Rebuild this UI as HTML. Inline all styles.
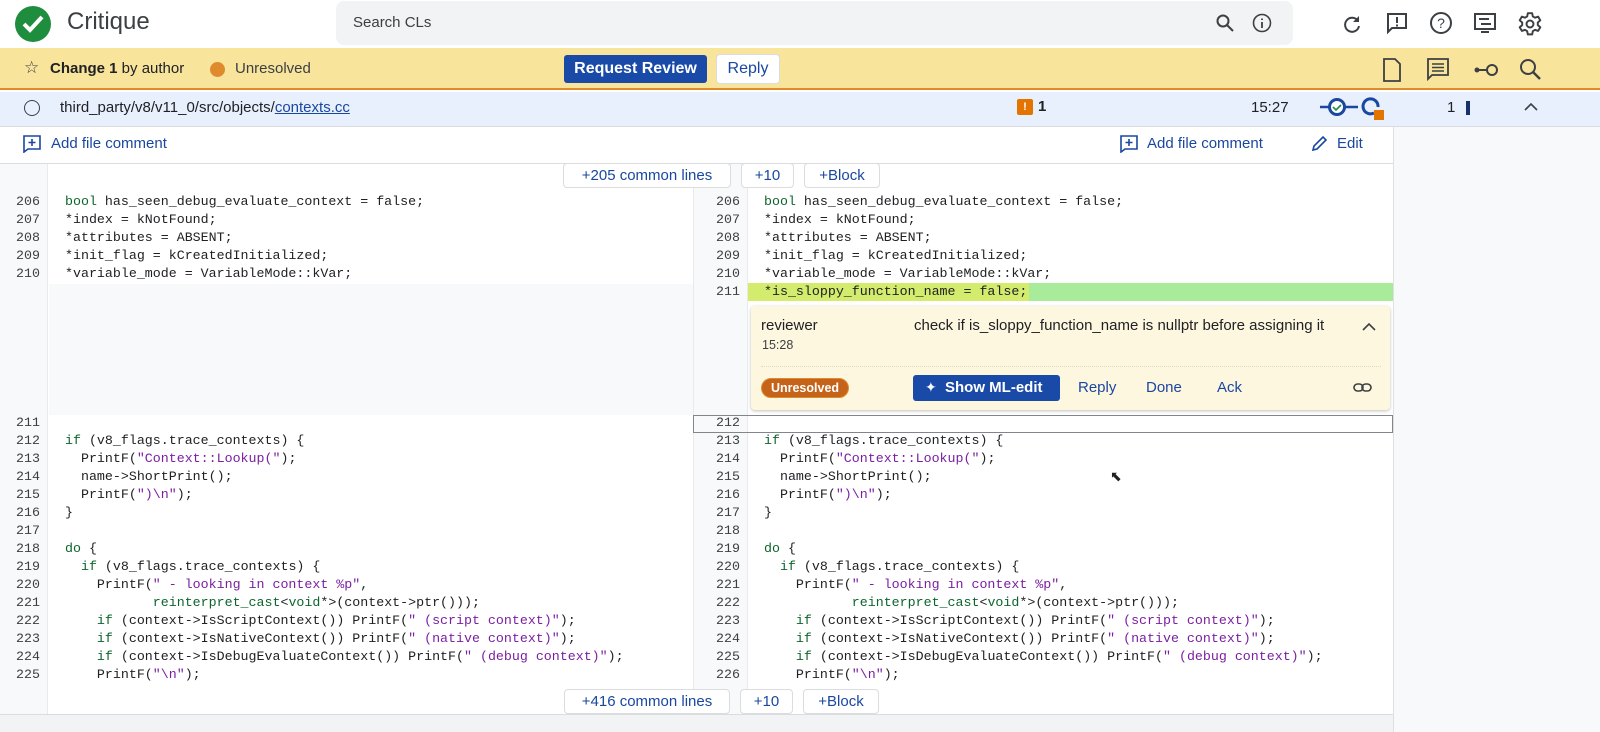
<!DOCTYPE html>
<html><head><meta charset="utf-8"><style>
*{box-sizing:border-box;margin:0;padding:0}
body{width:1600px;height:732px;overflow:hidden;background:#fff;font-family:"Liberation Sans",sans-serif;position:relative;color:#202124}
.abs{position:absolute}
.code{font-family:"Liberation Mono",monospace;font-size:13.3px;line-height:18px;white-space:pre;color:#202124}
.ln{font-family:"Liberation Mono",monospace;font-size:13.3px;line-height:18px;color:#3c4043;text-align:right;white-space:pre}
.k{color:#0d652d}.s{color:#7b1fa2}
.btn{position:absolute;border:1px solid #dadce0;border-radius:4px;background:#fff;color:#1a47a0;font-size:15px;text-align:center;line-height:24px}
.blue{color:#1a47a0}
</style></head><body>
<svg class="abs" style="left:14px;top:5px" width="38" height="38"><circle cx="19" cy="19" r="18" fill="#1e8e3e"/><path d="M10 19l6 6 12-13" stroke="#fff" stroke-width="4" fill="none"/></svg>
<div class="abs" style="left:67px;top:8px;font-size:24px;color:#3c4043">Critique</div>
<div class="abs" style="left:336px;top:1px;width:957px;height:44px;background:#f1f3f4;border-radius:8px"></div>
<div class="abs" style="left:353px;top:14px;font-size:15px;color:#3c4043">Search CLs</div>
<svg class="abs" style="left:1215px;top:13px" width="20" height="20"><circle cx="8" cy="8" r="5.5" stroke="#3c4043" stroke-width="2" fill="none"/><path d="M12 12l6 6" stroke="#3c4043" stroke-width="2"/></svg>
<svg class="abs" style="left:1252px;top:13px" width="20" height="20"><circle cx="10" cy="10" r="8.5" stroke="#3c4043" stroke-width="1.6" fill="none"/><path d="M10 9v6M10 5.5v1.5" stroke="#3c4043" stroke-width="1.8"/></svg>
<svg class="abs" style="left:1340px;top:12px" width="24" height="24"><path d="M18 9A7 7 0 1 0 19 14" stroke="#3c4043" stroke-width="2" fill="none"/><path d="M19 4v6h-6" fill="#3c4043"/></svg>
<svg class="abs" style="left:1385px;top:11px" width="24" height="24"><path d="M3 3h18v14H7l-4 4z" stroke="#3c4043" stroke-width="2" fill="none"/><path d="M12 6v6M12 13.5v2" stroke="#3c4043" stroke-width="2"/></svg>
<svg class="abs" style="left:1429px;top:11px" width="24" height="24"><circle cx="12" cy="12" r="10" stroke="#3c4043" stroke-width="2" fill="none"/><text x="12" y="17" font-size="14" text-anchor="middle" fill="#3c4043" font-family="Liberation Sans">?</text></svg>
<svg class="abs" style="left:1473px;top:11px" width="24" height="24"><rect x="2" y="3" width="20" height="15" stroke="#3c4043" stroke-width="2" fill="none"/><path d="M8 21h8M6 8h10M8 13h10" stroke="#3c4043" stroke-width="2"/></svg>
<svg class="abs" style="left:1517px;top:11px" width="26" height="26" viewBox="0 0 24 24"><path d="M10 2h4l.6 3 2 1.2 2.9-1 2 3.4-2.3 2v2.4l2.3 2-2 3.4-2.9-1-2 1.2-.6 3h-4l-.6-3-2-1.2-2.9 1-2-3.4 2.3-2v-2.4l-2.3-2 2-3.4 2.9 1 2-1.2z" stroke="#3c4043" stroke-width="1.8" fill="none" stroke-linejoin="round"/><circle cx="12" cy="12" r="3.2" stroke="#3c4043" stroke-width="1.8" fill="none"/></svg>
<div class="abs" style="left:0;top:48px;width:1600px;height:42px;background:#f9e49c;border-bottom:2px solid #e08a2e"></div>
<div class="abs" style="left:24px;top:58px;font-size:17px;color:#3c4043">☆</div>
<div class="abs" style="left:50px;top:60px;font-size:15px"><b>Change 1</b> by author</div>
<div class="abs" style="left:210px;top:62px;width:15px;height:15px;border-radius:50%;background:#e08a2e"></div>
<div class="abs" style="left:235px;top:60px;font-size:15px;color:#3c4043">Unresolved</div>
<div class="abs" style="left:564px;top:55px;width:143px;height:28px;background:#1a4aa8;border-radius:3px;color:#fff;font-size:16px;font-weight:bold;text-align:center;line-height:28px">Request Review</div>
<div class="btn" style="left:716px;top:54px;width:64px;height:30px;line-height:28px;font-size:16px">Reply</div>
<svg class="abs" style="left:1380px;top:57px" width="24" height="26"><path d="M4 2h11l5 5v17H4z" stroke="#3c4043" stroke-width="1.8" fill="none"/></svg>
<svg class="abs" style="left:1426px;top:57px" width="26" height="26"><path d="M2 2h20v16H6l-4 4z" stroke="#3c4043" stroke-width="1.8" fill="none"/><path d="M6 7h12M6 10.5h12M6 14h12" stroke="#3c4043" stroke-width="1.6"/></svg>
<svg class="abs" style="left:1472px;top:60px" width="28" height="20"><circle cx="5" cy="10" r="2.5" fill="#3c4043"/><path d="M7 10h8" stroke="#3c4043" stroke-width="2"/><circle cx="20" cy="10" r="5" stroke="#3c4043" stroke-width="2" fill="none"/></svg>
<svg class="abs" style="left:1518px;top:57px" width="26" height="26"><circle cx="10" cy="10" r="7" stroke="#3c4043" stroke-width="2" fill="none"/><path d="M15 15l7 7" stroke="#3c4043" stroke-width="2.4"/></svg>
<div class="abs" style="left:0;top:92px;width:1600px;height:35px;background:#e8f0fe;border-bottom:1px solid #dadce0"></div>
<div class="abs" style="left:24px;top:100px;width:16px;height:16px;border:1.6px solid #3c4043;border-radius:50%"></div>
<div class="abs" style="left:60px;top:99px;font-size:15px">third_party/v8/v11_0/src/objects/<span class="blue" style="text-decoration:underline">contexts.cc</span></div>
<div class="abs" style="left:1017px;top:99px;width:16px;height:16px;background:#e37400;border-radius:2px;color:#fff;font-size:11px;text-align:center;line-height:16px;font-weight:bold">!</div>
<div class="abs" style="left:1038px;top:98px;font-size:15px;font-weight:bold">1</div>
<div class="abs" style="left:1251px;top:99px;font-size:15px">15:27</div>
<svg class="abs" style="left:1318px;top:94px" width="72" height="30"><path d="M2 13h10M26 13h14" stroke="#1a47a0" stroke-width="2.5"/><circle cx="19" cy="13" r="7.5" stroke="#1a47a0" stroke-width="3" fill="#fff"/><path d="M15 13l3 3 5-5" stroke="#1e8e3e" stroke-width="1.6" fill="none"/><path d="M56 19A7.5 7.5 0 1 1 60 13" stroke="#1a47a0" stroke-width="3" fill="none"/><rect x="56" y="16" width="10" height="10" fill="#e37400"/></svg>
<div class="abs" style="left:1447px;top:99px;font-size:15px">1</div>
<div class="abs" style="left:1466px;top:101px;width:4px;height:14px;background:#1a2f6e"></div>
<svg class="abs" style="left:1523px;top:101px" width="16" height="12"><path d="M2 9l6-6 6 6" stroke="#3c4043" stroke-width="1.6" fill="none"/></svg>
<div class="abs" style="left:1393px;top:127px;width:207px;height:605px;background:#f8f9fa;border-left:1px solid #e0e0e0"></div>
<svg class="abs" style="left:23px;top:135px" width="18" height="18"><path d="M1 1h16v13H5l-4 3z" stroke="#1a47a0" stroke-width="1.6" fill="none"/><path d="M9 4v7M5.5 7.5h7" stroke="#1a47a0" stroke-width="1.6"/></svg>
<div class="abs blue" style="left:51px;top:135px;font-size:15px">Add file comment</div>
<svg class="abs" style="left:1120px;top:135px" width="18" height="18"><path d="M1 1h16v13H5l-4 3z" stroke="#1a47a0" stroke-width="1.6" fill="none"/><path d="M9 4v7M5.5 7.5h7" stroke="#1a47a0" stroke-width="1.6"/></svg>
<div class="abs blue" style="left:1147px;top:135px;font-size:15px">Add file comment</div>
<svg class="abs" style="left:1310px;top:135px" width="18" height="18"><path d="M3 15l1-4 9-9 3 3-9 9z" stroke="#1a47a0" stroke-width="1.6" fill="none"/></svg>
<div class="abs blue" style="left:1337px;top:135px;font-size:15px">Edit</div>
<div class="abs" style="left:0;top:163px;width:1393px;height:1px;background:#dadce0"></div>
<div class="abs" style="left:0;top:164px;width:48px;height:550px;background:#f8f9fa;border-right:1px solid #e8eaed"></div>
<div class="abs" style="left:693px;top:164px;width:55px;height:550px;background:#f8f9fa;border-left:1px solid #e8eaed;border-right:1px solid #e8eaed"></div>
<div class="btn" style="left:563px;top:163px;width:168px;height:25px">+205 common lines</div>
<div class="btn" style="left:741px;top:163px;width:53px;height:25px">+10</div>
<div class="btn" style="left:804px;top:163px;width:76px;height:25px">+Block</div>
<div class="abs ln" style="left:0;top:193px;width:40px">206
207
208
209
210</div>
<div class="abs code" style="left:65px;top:193px"><span class="k">bool</span> has_seen_debug_evaluate_context = false;
*index = kNotFound;
*attributes = ABSENT;
*init_flag = kCreatedInitialized;
*variable_mode = VariableMode::kVar;</div>
<div class="abs" style="left:49px;top:284px;width:644px;height:131px;background:#f8f9fa"></div>
<div class="abs ln" style="left:693px;top:193px;width:47px">206
207
208
209
210
211</div>
<div class="abs code" style="left:764px;top:193px"><span class="k">bool</span> has_seen_debug_evaluate_context = false;
*index = kNotFound;
*attributes = ABSENT;
*init_flag = kCreatedInitialized;
*variable_mode = VariableMode::kVar;</div>
<div class="abs" style="left:748px;top:283px;width:645px;height:18px;background:#a8eb9a"></div>
<div class="abs" style="left:748px;top:283px;width:281px;height:18px;background:#d3ec6e"></div>
<div class="abs code" style="left:764px;top:283px">*is_sloppy_function_name = false;</div>
<div class="abs" style="left:751px;top:306px;width:639px;height:104px;background:#fef7e0;border-radius:4px;box-shadow:0 1px 3px rgba(0,0,0,.25)"></div>
<div class="abs" style="left:761px;top:317px;font-size:15px">reviewer</div>
<div class="abs" style="left:762px;top:338px;font-size:12.5px;color:#3c4043">15:28</div>
<div class="abs" style="left:914px;top:317px;font-size:15px">check if is_sloppy_function_name is nullptr before assigning it</div>
<svg class="abs" style="left:1362px;top:322px" width="14" height="10"><path d="M1 8l6-6 6 6" stroke="#3c4043" stroke-width="1.6" fill="none"/></svg>
<div class="abs" style="left:761px;top:366px;width:620px;border-top:1px dotted #e0d9bf"></div>
<div class="abs" style="left:761px;top:378px;width:88px;height:20px;background:#c5631a;border-radius:10px;border:1px solid #e08a2e;color:#fff;font-size:12.5px;font-weight:bold;text-align:center;line-height:18px">Unresolved</div>
<div class="abs" style="left:913px;top:375px;width:147px;height:26px;background:#1a4aa8;border-radius:3px;color:#fff;font-size:15px;font-weight:bold;line-height:26px;padding-left:32px">Show ML-edit</div>
<div class="abs" style="left:925px;top:379px;color:#fff;font-size:14px">✦</div>
<div class="abs blue" style="left:1078px;top:379px;font-size:15px">Reply</div>
<div class="abs blue" style="left:1146px;top:379px;font-size:15px">Done</div>
<div class="abs blue" style="left:1217px;top:379px;font-size:15px">Ack</div>
<svg class="abs" style="left:1353px;top:382px" width="20" height="12"><rect x="1" y="2" width="9" height="7" rx="3.5" stroke="#3c4043" stroke-width="1.6" fill="none"/><rect x="9" y="2" width="9" height="7" rx="3.5" stroke="#3c4043" stroke-width="1.6" fill="none"/></svg>
<div class="abs" style="left:693px;top:415px;width:700px;height:18px;border:1px solid #80868b"></div>
<div class="abs ln" style="left:0;top:414px;width:40px">211
212
213
214
215
216
217
218
219
220
221
222
223
224
225</div>
<div class="abs code" style="left:65px;top:432px"><span class="k">if</span> (v8_flags.trace_contexts) {
  PrintF(<span class="s">"Context::Lookup("</span>);
  name-&gt;ShortPrint();
  PrintF(<span class="s">")\n"</span>);
}

<span class="k">do</span> {
  <span class="k">if</span> (v8_flags.trace_contexts) {
    PrintF(<span class="s">" - looking in context %p"</span>,
           <span class="k">reinterpret_cast</span>&lt;<span class="k">void</span>*&gt;(context-&gt;ptr()));
    <span class="k">if</span> (context-&gt;IsScriptContext()) PrintF(<span class="s">" (script context)"</span>);
    <span class="k">if</span> (context-&gt;IsNativeContext()) PrintF(<span class="s">" (native context)"</span>);
    <span class="k">if</span> (context-&gt;IsDebugEvaluateContext()) PrintF(<span class="s">" (debug context)"</span>);
    PrintF(<span class="s">"\n"</span>);</div>
<div class="abs ln" style="left:693px;top:414px;width:47px">212
213
214
215
216
217
218
219
220
221
222
223
224
225
226</div>
<div class="abs code" style="left:764px;top:432px"><span class="k">if</span> (v8_flags.trace_contexts) {
  PrintF(<span class="s">"Context::Lookup("</span>);
  name-&gt;ShortPrint();
  PrintF(<span class="s">")\n"</span>);
}

<span class="k">do</span> {
  <span class="k">if</span> (v8_flags.trace_contexts) {
    PrintF(<span class="s">" - looking in context %p"</span>,
           <span class="k">reinterpret_cast</span>&lt;<span class="k">void</span>*&gt;(context-&gt;ptr()));
    <span class="k">if</span> (context-&gt;IsScriptContext()) PrintF(<span class="s">" (script context)"</span>);
    <span class="k">if</span> (context-&gt;IsNativeContext()) PrintF(<span class="s">" (native context)"</span>);
    <span class="k">if</span> (context-&gt;IsDebugEvaluateContext()) PrintF(<span class="s">" (debug context)"</span>);
    PrintF(<span class="s">"\n"</span>);</div>
<div class="abs" style="left:1110px;top:468px;font-size:14px">⬉</div>
<div class="btn" style="left:564px;top:689px;width:166px;height:25px">+416 common lines</div>
<div class="btn" style="left:740px;top:689px;width:53px;height:25px">+10</div>
<div class="btn" style="left:803px;top:689px;width:76px;height:25px">+Block</div>
<div class="abs" style="left:0;top:714px;width:1393px;height:18px;background:#f1f3f4;border-top:1px solid #dadce0"></div>
</body></html>
